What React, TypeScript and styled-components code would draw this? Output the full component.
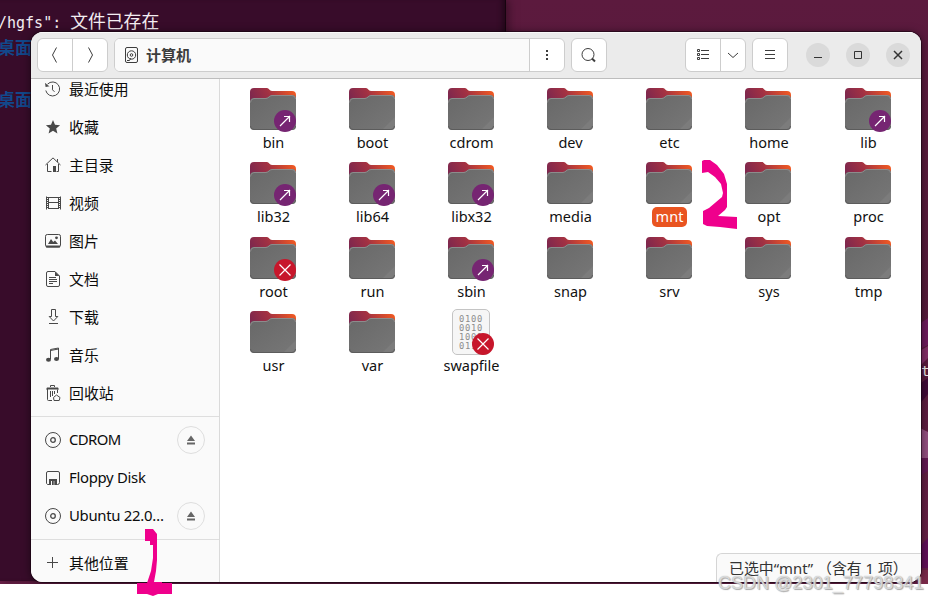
import React from 'react';
import styled, { createGlobalStyle, css } from 'styled-components';

const Global = createGlobalStyle`
  * { box-sizing: border-box; }
  html, body { margin: 0; padding: 0; }
  body { width: 928px; height: 598px; overflow: hidden; background: #fff; }
`;

const latin = `'Noto Sans', 'Noto Sans CJK SC', sans-serif`;

const Screen = styled.div`
  position: relative;
  width: 928px;
  height: 598px;
  overflow: hidden;
  background: #fff;
  font-family: ${latin};
  color: #111;
`;

const Desktop = styled.div`
  display: flex;
  width: 928px;
  height: 584px;
  overflow: hidden;
  background: linear-gradient(#5c1a3e, #551a3a 50%, #6a2148);
`;

const Terminal = styled.div`
  width: 506px;
  height: 581px;
  flex: none;
  padding-top: 9px;
  background: #380c2a;
  border-right: 1px solid #16040f;
  box-shadow: inset -6px 0 5px -3px #24081b, 3px 0 8px #3c1029;
  font: 15px/26px 'DejaVu Sans Mono', 'Noto Sans CJK SC', monospace;
  color: #f4eef2;
`;

const TermLine = styled.div<{ $blue?: boolean }>`
  height: 26px;
  margin-left: -2px;
  white-space: pre;
  ${p => p.$blue && css`color: #12488b; font-weight: 700; font-size: 17px;`}
`;

const Wide = styled.span`
  font-size: 17.8px;
`;

const Wallpaper = styled.svg`
  position: absolute;
  left: 918px;
  top: 270px;
`;

const TermTail = styled.span`
  position: absolute;
  left: 921px;
  top: 361px;
  font: 14.6px/20px 'DejaVu Sans Mono', monospace;
  color: #eee;
`;

const Window = styled.main`
  position: absolute;
  left: 31px;
  top: 32px;
  width: 890px;
  height: 550px;
  display: flex;
  flex-direction: column;
  overflow: hidden;
  border-radius: 12px;
  background: #fff;
`;

const WindowShadow = styled.div`
  position: absolute;
  left: 31px;
  top: 32px;
  width: 890px;
  height: 550px;
  border-radius: 12px;
  box-shadow: 0 0 0 1px rgba(20, 2, 14, .55), 0 1px 10px rgba(0, 0, 0, .55);
`;

const ShadowClip = styled.div`
  position: absolute;
  left: 0;
  top: 0;
  width: 928px;
  height: 584px;
  overflow: hidden;
`;

const Header = styled.header`
  flex: none;
  height: 47px;
  display: flex;
  align-items: center;
  padding: 0 11px 1px 6px;
  background: #ebebeb;
  border-bottom: 1px solid #bdbdbd;
  box-shadow: inset 0 1px #f9f9f9;
`;

const Group = styled.div<{ $width: number; $ml?: number }>`
  display: flex;
  flex: none;
  width: ${p => p.$width}px;
  height: 34px;
  margin-left: ${p => p.$ml ?? 0}px;
  border: 1px solid #cdcdcd;
  border-radius: 6px;
  background: #fff;
  overflow: hidden;
  color: #3d3d3d;
`;

const GroupButton = styled.button<{ $width?: number }>`
  display: flex;
  align-items: center;
  justify-content: center;
  ${p => (p.$width ? `width: ${p.$width}px;` : 'flex: 1;')}
  padding: 0;
  border: 0;
  background: none;
  color: inherit;
  & + &, div + & { border-left: 1px solid #cdcdcd; }
`;

const PathBar = styled.div`
  flex: 1;
  display: flex;
  align-items: center;
  gap: 7px;
  padding-left: 8px;
  background: #fafafa;
  font: 700 15px/20px ${latin};
  color: #3d3d3d;
`;

const WindowControls = styled.div`
  display: flex;
  gap: 16px;
  margin-left: auto;
`;

const Control = styled.button`
  display: flex;
  align-items: center;
  justify-content: center;
  width: 24px;
  height: 24px;
  padding: 0;
  border: 0;
  border-radius: 50%;
  background: #dadada;
  color: #333;
`;

const Body = styled.div`
  flex: 1;
  display: flex;
  min-height: 0;
`;

const Sidebar = styled.nav`
  flex: none;
  width: 189px;
  display: flex;
  flex-direction: column;
  background: #fafafa;
  border-right: 1px solid #dadada;
  overflow: hidden;
`;

const Section = styled.div<{ $top: number; $bottom: number }>`
  flex: none;
  padding: ${p => p.$top}px 0 ${p => p.$bottom}px;
  & + & { border-top: 1px solid #dedede; }
`;

const BookmarkList = styled.div`
  display: flex;
  flex-direction: column;
  justify-content: flex-end;
  height: 333px;
`;

const Place = styled.div`
  display: flex;
  flex: none;
  align-items: center;
  height: 38px;
  padding: 0 14px;
  font-size: 14.9px;
  color: #0c0c0c;
`;

const PlaceIcon = styled.span`
  display: flex;
  width: 16px;
  margin-right: 8px;
  color: #484848;
`;

const PlaceName = styled.span<{ $track: number }>`
  flex: 1;
  padding-bottom: 2px;
  white-space: nowrap;
  letter-spacing: ${p => p.$track}px;
`;

const Eject = styled.button`
  display: flex;
  align-items: center;
  justify-content: center;
  width: 28px;
  height: 28px;
  padding: 0;
  border: 1px solid #dedede;
  border-radius: 50%;
  background: none;
  color: #666;
`;

const Content = styled.section`
  position: relative;
  flex: 1;
  background: #fff;
  padding: 6px 0 0 4px;
`;

const FileGrid = styled.div`
  display: grid;
  grid-template-columns: repeat(5, 99px) 100px 99px;
  grid-auto-rows: 74.4px;
`;

const File = styled.div`
  display: flex;
  flex-direction: column;
  align-items: center;
`;

const FileArt = styled.svg`
  display: block;
  flex: none;
  margin-right: 2px;
`;

const FileName = styled.span<{ $selected?: boolean }>`
  height: 20px;
  margin-top: -2px;
  padding: 0 4px;
  border-radius: 5px;
  font-size: 14.5px;
  line-height: 19px;
  white-space: nowrap;
  ${p => p.$selected && css`background: #e95420; color: #fff;`}
`;

const Status = styled.div`
  position: absolute;
  right: 0;
  bottom: 0;
  width: 205px;
  height: 29px;
  display: flex;
  align-items: center;
  padding: 0 0 1px 12px;
  border: solid #d5d5d5;
  border-width: 1px 0 0 1px;
  border-top-left-radius: 6px;
  background: #fafafa;
  font-size: 14.9px;
  white-space: pre;
  color: #333;
`;

const Marks = styled.svg`
  position: absolute;
  left: 0;
  top: 0;
`;

const Watermark = styled.div`
  position: absolute;
  left: 718px;
  top: 573px;
  font: 17.8px/20px 'Liberation Sans', sans-serif;
  letter-spacing: 0.2px;
  white-space: nowrap;
  color: rgba(255, 255, 255, .6);
  text-shadow: 0 0 1px #999, 1px 1px 1px #aaa;
`;

const Icon = ({ children }: { children: React.ReactNode }) => (
  <svg width="16" height="16" viewBox="0 0 16 16" fill="none" stroke="currentColor">
    {children}
  </svg>
);

const icons: Record<string, React.ReactNode> = {
  recent: <><path d="M2.5 3.2A7 7 0 1 1 .8 9.5" /><path d="M7.500 4v4.800l2 2" /><path d="M0 1.800l.6 4.200 4-.8-1.800-1z" fill="currentColor" stroke="none" /></>,
  star: <path d="M8 1l2 4.8 5.1.4-3.9 3.3 1.2 5L8 11.8l-4.4 2.7 1.2-5L.9 6.2 6 5.8z" fill="currentColor" stroke="none" />,
  home: <><path d="M.5 8L8 .9 15.5 8M2.5 7v7.5h4M13.5 7v7.5h-2M12.5 2v3" /><path d="M8 9h3v6H8z" fill="currentColor" stroke="none" /></>,
  video: <><path d="M1.500 1.500v13M15.500 1.500v13M4 2.500h9M4 7.500h9M4 13.500h9M3.500 2v12M13.500 2v12" /><path d="M2.500 2v12M14.500 2v12" strokeDasharray="1 1" /></>,
  picture: <><rect x=".5" y="1.5" width="15" height="12.5" rx="1.8" /><path d="M1 13.6h14" strokeWidth="2" /><path d="M3 11l3-5 2.2 3L10 7.5l3 3.5z" fill="currentColor" stroke="none" /><circle cx="11.5" cy="4.8" r="1.4" fill="currentColor" stroke="none" /></>,
  document: <><path d="M10 .5H3A1.5 1.5 0 0 0 1.5 2v12A1.5 1.5 0 0 0 3 15.5h10a1.5 1.5 0 0 0 1.5-1.5V5zM4 6.500h7M4 8.500h8M4 10.500h8M4 12.500h4" /><path d="M10 .5v4.500h4.500z" fill="currentColor" stroke="none" /></>,
  download: <path d="M6.500 .5h4v7h2.300L8.500 12 4.200 7.500h2.300zM4 14.500h9" />,
  music: <><path d="M5.500 12V2.500l8-1.500v11M5.500 3.500l8-1.500" /><ellipse cx="3.500" cy="12.800" rx="2.500" ry="2" fill="currentColor" stroke="none" /><ellipse cx="11.500" cy="12" rx="2.500" ry="2" fill="currentColor" stroke="none" /></>,
  trash: <><path d="M5.500 2v-1.500h4V2" /><path d="M1 4.500l1-2h11l1 2z" fill="currentColor" stroke="none" /><path d="M2.500 4v10.500a1 1 0 0 0 1 1H7M12.500 4.500V8M5.500 6v6M7.500 6v5M9.500 6v3" /><path d="M8.500 12.500l3-2.500 3.500 2.500-.8 3H9z" /></>,
  disc: <><circle cx="8" cy="8" r="7.500" /><circle cx="8" cy="8" r="2.300" strokeWidth="1.300" /></>,
  floppy: <><path d="M3 1.500h10A1.500 1.500 0 0 1 14.500 3v9.500a2 2 0 0 1-2 2h-10l-1-1.200V3A1.500 1.500 0 0 1 3 1.500z" /><path d="M4 9h8v6H4z" fill="currentColor" stroke="none" /><path d="M6.500 11v4" stroke="#fafafa" /><path d="M9 11v4" stroke="#fafafa" strokeWidth=".6" /></>,
  plus: <path d="M7.500 2v11M2 7.500h11" />,
};

interface PlaceData { icon: string; name: string; eject?: boolean; track?: number }

const bookmarks: PlaceData[] = [
  { icon: 'recent', name: '最近使用' },
  { icon: 'star', name: '收藏' },
  { icon: 'home', name: '主目录' },
  { icon: 'video', name: '视频' },
  { icon: 'picture', name: '图片' },
  { icon: 'document', name: '文档' },
  { icon: 'download', name: '下载' },
  { icon: 'music', name: '音乐' },
  { icon: 'trash', name: '回收站' },
];

const devices: PlaceData[] = [
  { icon: 'disc', name: 'CDROM', eject: true, track: -0.6 },
  { icon: 'floppy', name: 'Floppy Disk', track: -0.3 },
  { icon: 'disc', name: 'Ubuntu 22.0…', eject: true, track: -0.3 },
];

const PlaceRow = ({ place }: { place: PlaceData }) => (
  <Place>
    <PlaceIcon><Icon>{icons[place.icon]}</Icon></PlaceIcon>
    <PlaceName $track={place.track ?? 0}>{place.name}</PlaceName>
    {place.eject && (
      <Eject aria-label="eject">
        <svg width="10" height="10" viewBox="0 0 10 10" fill="currentColor"><path d="M5 .5L9 6H1zM1 7.500h8V9.500H1z" /></svg>
      </Eject>
    )}
  </Place>
);

type Emblem = 'link' | 'deny';
interface FileData { name: string; emblem?: Emblem; selected?: boolean; binary?: boolean }

const files: FileData[] = [
  { name: 'bin', emblem: 'link' }, { name: 'boot' }, { name: 'cdrom' }, { name: 'dev' }, { name: 'etc' }, { name: 'home' }, { name: 'lib', emblem: 'link' },
  { name: 'lib32', emblem: 'link' }, { name: 'lib64', emblem: 'link' }, { name: 'libx32', emblem: 'link' }, { name: 'media' }, { name: 'mnt', selected: true }, { name: 'opt' }, { name: 'proc' },
  { name: 'root', emblem: 'deny' }, { name: 'run' }, { name: 'sbin', emblem: 'link' }, { name: 'snap' }, { name: 'srv' }, { name: 'sys' }, { name: 'tmp' },
  { name: 'usr' }, { name: 'var' }, { name: 'swapfile', emblem: 'deny', binary: true },
];

const EmblemMark = ({ kind }: { kind: Emblem }) => (
  <>
    <circle cx="36" cy="37" r="11" fill={kind === 'link' ? '#762572' : '#c7162b'} />
    <path
      d={kind === 'link' ? 'M31 42l10-10M35 32.500h5.500v5.500' : 'M30.500 31.500l11 11M41.500 31.500l-11 11'}
      stroke="#fff"
      strokeWidth="1.2"
      fill="none"
    />
  </>
);

const FolderArt = () => (
  <>
    <path d="M1 8a4 4 0 0 1 4-4h13c2 0 2.500 3 5 3h20a4 4 0 0 1 4 4v20H1z" fill="url(#folderBack)" />
    <path d="M1 18a4 4 0 0 1 4-4h12c2.500 0 3.500-3 6-3h20a4 4 0 0 1 4 4v27a4 4 0 0 1-4 4H5a4 4 0 0 1-4-4z" fill="url(#folderFront)" />
    <path d="M1.500 18.500A4 4 0 0 1 5 14.500h12c2.500 0 3.500-3 6-3h20a3.500 3.500 0 0 1 3.500 3.500" fill="none" stroke="#8c8c8c" />
    <path d="M47 33v9a4 4 0 0 1-4 4h-9z" fill="#888" opacity=".4" />
    <path d="M1.500 42A3.500 3.500 0 0 0 5 45.500h38a3.500 3.500 0 0 0 3.500-3.500" fill="none" stroke="#5c5c5c" />
  </>
);

const BinaryText = styled.text`
  font: 8.800px 'DejaVu Sans Mono', monospace;
  letter-spacing: 0.7px;
  fill: #8c8c8c;
`;

const BinaryArt = () => (
  <>
    <rect x="5.500" y="2.500" width="37" height="45" rx="4.500" fill="#f6f6f6" stroke="#c4c4c4" />
    {['0100', '0010', '1001', '0110'].map((row, i) => (
      <BinaryText key={i} x="12" y={15 + i * 9}>{row}</BinaryText>
    ))}
  </>
);

const FileItem = ({ file }: { file: FileData }) => (
  <File>
    <FileArt width="48" height="50" viewBox="0 1 48 50">
      {file.binary ? <BinaryArt /> : <FolderArt />}
      {file.emblem && <EmblemMark kind={file.emblem} />}
    </FileArt>
    <FileName $selected={file.selected}>{file.name}</FileName>
  </File>
);

const GradientDefs = styled.svg`
  position: absolute;
`;

const SharedGradients = () => (
  <GradientDefs width="0" height="0">
    <defs>
      <linearGradient id="folderBack" x1="0" y1=".5" x2="1" y2=".2">
        <stop offset="0" stopColor="#78264f" />
        <stop offset=".45" stopColor="#a23143" />
        <stop offset="1" stopColor="#f15a22" />
      </linearGradient>
      <linearGradient id="folderFront" x1="0" y1="0" x2="1" y2="1">
        <stop offset="0" stopColor="#686868" />
        <stop offset="1" stopColor="#777" />
      </linearGradient>
    </defs>
  </GradientDefs>
);

export default function App() {
  return (
    <Screen>
      <Global />
      <Desktop>
        <Terminal>
          <TermLine>/hgfs": <Wide>文件已存在</Wide></TermLine>
          <TermLine $blue>桌面</TermLine>
          <TermLine />
          <TermLine $blue>桌面</TermLine>
        </Terminal>
      </Desktop>
      <Wallpaper width="10" height="314">
        <path d="M0 55L10 48V75L0 80z" fill="#6d1a5c" />
        <path d="M0 82L10 76V88L0 98z" fill="#842f68" />
        <path d="M0 115L10 108V124L0 136z" fill="#400a37" />
        <path d="M0 157L10 162V188H0z" fill="#945081" />
        <path d="M0 188h10v13L0 207z" fill="#641953" />
        <path d="M0 278L10 268V298H0z" fill="#610f58" />
        <path d="M0 300h10v14H0z" fill="#7b2a4a" />
      </Wallpaper>
      <TermTail>t</TermTail>
      <ShadowClip><WindowShadow /></ShadowClip>
      <Window>
        <Header>
          <Group $width={71}>
            <GroupButton><Icon><path d="M9.500 .5L5.500 8l4 7.500" /></Icon></GroupButton>
            <GroupButton><Icon><path d="M6.500 .5l4 7.500-4 7.500" /></Icon></GroupButton>
          </Group>
          <Group $width={451} $ml={6}>
            <PathBar>
              <Icon>
                <rect x="2.500" y=".5" width="12" height="15" rx="1.500" />
                <circle cx="8.500" cy="8" r="4.200" /><circle cx="8.500" cy="8" r="1.300" />
                <path d="M4 13.500h2.500l1.500-2.500" />
              </Icon>
              <span>计算机</span>
            </PathBar>
            <GroupButton $width={35}><Icon><path d="M8 3v2M8 7v2M8 11v2" strokeWidth="2" /></Icon></GroupButton>
          </Group>
          <Group $width={36} $ml={6}>
            <GroupButton><Icon><circle cx="7" cy="7.500" r="6" /><path d="M11 11.500l3 3" strokeWidth="2" /></Icon></GroupButton>
          </Group>
          <Group $width={61} $ml={78}>
            <GroupButton>
              <Icon><path d="M2.500 2.500h2v2h-2zM2.500 6.500h2v2h-2zM2.500 10.500h2v2h-2zM6 3.500h8M6 7.500h8M6 11.500h8" /></Icon>
            </GroupButton>
            <GroupButton $width={25}><Icon><path d="M3 6l5 4.500L13 6" /></Icon></GroupButton>
          </Group>
          <Group $width={36} $ml={6}>
            <GroupButton><Icon><path d="M3 3.500h10M3 7.500h10M3 11.500h10" /></Icon></GroupButton>
          </Group>
          <WindowControls>
            <Control aria-label="minimize"><Icon><path d="M4 10.500h8" /></Icon></Control>
            <Control aria-label="maximize"><Icon><path d="M4.500 4.500h7v7h-7z" /></Icon></Control>
            <Control aria-label="close"><Icon><path d="M4 4l8 8M12 4l-8 8" strokeWidth="1.500" /></Icon></Control>
          </WindowControls>
        </Header>
        <Body>
          <Sidebar>
            <Section $top={0} $bottom={4}>
              <BookmarkList>{bookmarks.map(p => <PlaceRow key={p.name} place={p} />)}</BookmarkList>
            </Section>
            <Section $top={4} $bottom={4}>{devices.map(p => <PlaceRow key={p.name} place={p} />)}</Section>
            <Section $top={4} $bottom={0}><PlaceRow place={{ icon: 'plus', name: '其他位置' }} /></Section>
          </Sidebar>
          <Content>
            <SharedGradients />
            <FileGrid>{files.map(f => <FileItem key={f.name} file={f} />)}</FileGrid>
            <Status>已选中“mnt” （含有 1 项）</Status>
          </Content>
        </Body>
      </Window>
      <Marks width="928" height="598" fill="#ef008c">
        <path d="M702 161L704 160H710L717 165L724 174L727 184V207L725 210L718 216L737 217V229L720 227L707 226L703 224V211L709 208L722 197L723 193L721 184L715 177L708 172L702 173Z" />
        <path d="M145 529H153L157 534V560L156 571L154 582H162V583H172V594H158L153 596L147 594H137V583H147L151 571L153 558V545H150V541H145Z" />
      </Marks>
      <Watermark>CSDN @2301_77798341</Watermark>
    </Screen>
  );
}
